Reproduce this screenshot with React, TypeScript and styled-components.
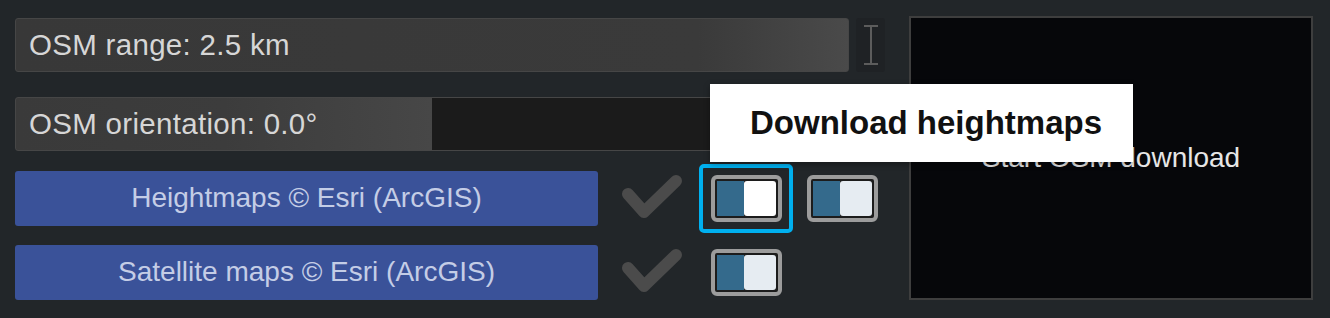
import React from "react";
import styled, { createGlobalStyle } from "styled-components";

const GlobalStyle = createGlobalStyle`
  html, body {
    margin: 0;
    padding: 0;
    background: #222629;
    font-family: "Liberation Sans", Arial, sans-serif;
  }
`;

function CheckMark() {
  return (
    <CheckIcon width="62" height="48" viewBox="0 0 62 48">
      <polyline
        points="7,20 23,38 55,7"
        fill="none"
        stroke="#4b4b4b"
        strokeWidth="12"
        strokeLinejoin="round"
        strokeLinecap="round"
      />
    </CheckIcon>
  );
}

function TextCursor() {
  return (
    <svg width="29" height="54" viewBox="0 0 29 54">
      <g stroke="#5c5c5c" strokeWidth="2" fill="none">
        <line x1="8" y1="8" x2="22" y2="8" />
        <line x1="8" y1="46" x2="22" y2="46" />
        <line x1="15" y1="8" x2="15" y2="46" />
      </g>
    </svg>
  );
}

function Toggle({ hover }: { hover?: boolean }) {
  return (
    <ToggleFrame>
      <ToggleTrack>
        <ToggleOn />
        <ToggleKnob $hover={hover} />
      </ToggleTrack>
    </ToggleFrame>
  );
}

export default function App() {
  return (
    <>
      <GlobalStyle />
      <Page>
        <LeftColumn>
          <SliderRow>
            <Slider $fill={100}>
              <SliderLabel>OSM range: 2.5 km</SliderLabel>
            </Slider>
            <CursorBox>
              <TextCursor />
            </CursorBox>
          </SliderRow>
          <SliderRow $top={25}>
            <Slider $fill={50}>
              <SliderLabel>OSM orientation: 0.0°</SliderLabel>
            </Slider>
            <CursorSpacer />
          </SliderRow>
          <ActionRow $top={19}>
            <EsriButton>Heightmaps © Esri (ArcGIS)</EsriButton>
            <CheckMark />
            <FocusRing>
              <Toggle hover />
            </FocusRing>
            <Toggle />
            <Tooltip>Download heightmaps</Tooltip>
          </ActionRow>
          <ActionRow $top={18}>
            <EsriButton>Satellite maps © Esri (ArcGIS)</EsriButton>
            <CheckMark />
            <ToggleSlot>
              <Toggle />
            </ToggleSlot>
          </ActionRow>
        </LeftColumn>
        <DownloadPanel>Start OSM download</DownloadPanel>
      </Page>
    </>
  );
}

const Page = styled.div`
  width: 1330px;
  height: 318px;
  box-sizing: border-box;
  padding: 16px 17px 18px 15px;
  display: flex;
  gap: 24px;
`;

const LeftColumn = styled.div`
  width: 870px;
  display: flex;
  flex-direction: column;
  padding-top: 2px;
`;

const SliderRow = styled.div<{ $top?: number }>`
  display: flex;
  gap: 7px;
  height: 54px;
  margin-top: ${(p) => p.$top ?? 0}px;
`;

const Slider = styled.div<{ $fill: number }>`
  flex: 1;
  box-sizing: border-box;
  border: 1px solid #464646;
  border-radius: 3px;
  background: ${(p) =>
    p.$fill >= 100
      ? "linear-gradient(90deg, #383838 0%, #3a3a3a 82%, #4a4a4a 100%)"
      : "linear-gradient(90deg, #3a3a3a 0%, #3c3c3c 25%, #474747 50%, #1b1b1b 50%, #1b1b1b 100%)"};
  display: flex;
  align-items: center;
  padding-left: 13px;
`;

const SliderLabel = styled.span`
  color: #d6d6d6;
  font-size: 29.5px;
  letter-spacing: 0.3px;
`;

const CursorBox = styled.div`
  width: 29px;
  background: #1f2225;
  border-radius: 3px;
`;

const CursorSpacer = styled.div`
  width: 29px;
`;

const ActionRow = styled.div<{ $top?: number }>`
  position: relative;
  display: flex;
  align-items: center;
  height: 56px;
  margin-top: ${(p) => p.$top ?? 0}px;
`;

const EsriButton = styled.div`
  width: 583px;
  height: 55px;
  box-sizing: border-box;
  background: #3a5299;
  border-radius: 3px;
  color: #c4cde6;
  font-size: 28px;
  display: flex;
  align-items: center;
  justify-content: center;
  margin-right: 23px;
`;

const CheckIcon = styled.svg`
  display: block;
  margin-right: 16px;
`;

const FocusRing = styled.div`
  box-sizing: border-box;
  width: 94px;
  height: 69px;
  border: 4px solid #00b0ef;
  border-radius: 5px;
  display: flex;
  align-items: center;
  justify-content: center;
  margin-right: 14px;
`;

const ToggleSlot = styled.div`
  width: 94px;
  display: flex;
  justify-content: center;
`;

const ToggleFrame = styled.div`
  box-sizing: border-box;
  width: 71px;
  height: 47px;
  border: 4px solid #9c9c9c;
  border-radius: 6px;
  background: #1c1c1c;
  padding: 2px;
`;

const ToggleTrack = styled.div`
  display: flex;
  height: 100%;
`;

const ToggleOn = styled.div`
  width: 27px;
  background: #346a8c;
`;

const ToggleKnob = styled.div<{ $hover?: boolean }>`
  flex: 1;
  background: ${(p) => (p.$hover ? "#ffffff" : "#e6ecf2")};
  border-radius: 3px;
`;

const Tooltip = styled.div`
  position: absolute;
  left: 695px;
  top: -86px;
  width: 423px;
  height: 78px;
  box-sizing: border-box;
  background: #ffffff;
  color: #111111;
  font-size: 33px;
  font-weight: bold;
  display: flex;
  align-items: center;
  padding-left: 40px;
  box-shadow: 0 2px 6px rgba(0, 0, 0, 0.35);
  z-index: 2;
`;

const DownloadPanel = styled.div`
  width: 404px;
  height: 284px;
  box-sizing: border-box;
  background: #06070a;
  border: 2px solid #3e3e3e;
  color: #e6e6e6;
  font-size: 28px;
  display: flex;
  align-items: center;
  justify-content: center;
`;
